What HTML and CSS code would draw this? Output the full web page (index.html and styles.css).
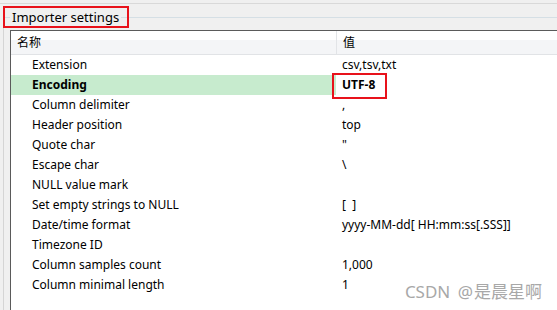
FILE: index.html
```html
<!DOCTYPE html>
<html lang="zh">
<head>
  <meta charset="UTF-8" />
  <meta name="viewport" content="width=device-width, initial-scale=1.0"/>
  <title>Importer settings</title>
  <link rel="stylesheet" href="styles.css">
</head>
<body>
  <div class="frame-top"></div>

  <div class="group">
    <span class="group-title">Importer settings</span>
    <span class="mark mark-title"></span>

    <div class="props">
      <div class="props-head">
        <div class="cell name-col">名称</div>
        <div class="cell value-col">值</div>
      </div>

      <div class="row"><div class="cell name">Extension</div><div class="cell value">csv,tsv,txt</div></div>
      <div class="row changed">
        <div class="cell name">Encoding</div>
        <div class="cell value">UTF-8<span class="mark mark-value"></span></div>
      </div>
      <div class="row"><div class="cell name">Column delimiter</div><div class="cell value">,</div></div>
      <div class="row"><div class="cell name">Header position</div><div class="cell value">top</div></div>
      <div class="row"><div class="cell name">Quote char</div><div class="cell value">"</div></div>
      <div class="row"><div class="cell name">Escape char</div><div class="cell value">\</div></div>
      <div class="row"><div class="cell name">NULL value mark</div><div class="cell value"></div></div>
      <div class="row"><div class="cell name">Set empty strings to NULL</div><div class="cell value">[&nbsp;&nbsp;]</div></div>
      <div class="row"><div class="cell name">Date/time format</div><div class="cell value">yyyy-MM-dd[ HH:mm:ss[.SSS]]</div></div>
      <div class="row"><div class="cell name">Timezone ID</div><div class="cell value"></div></div>
      <div class="row"><div class="cell name">Column samples count</div><div class="cell value">1,000</div></div>
      <div class="row"><div class="cell name">Column minimal length</div><div class="cell value">1</div></div>
    </div>
  </div>

  <div class="watermark">CSDN <span class="wm-at">@</span>是晨星啊</div>
</body>
</html>
```

FILE: styles.css
```css
html, body {
  height: 100%;
}

body {
  margin: 0;
  background-color: #f0f0f0;
  color: #000;
  font-family: "Noto Sans", "Noto Sans CJK SC", sans-serif;
  font-size: 12px;
  overflow: hidden;
  position: relative;
}

.frame-top {
  height: 3px;
  border-bottom: 1px solid #d9d9d9;
}

.group {
  position: relative;
  margin: 13px 0 0 3px;
  border-top: 1px solid #d5dfe5;
  border-left: 1px solid #d5d5d5;
  padding: 12px 0 0 6px;
}

.group-title {
  position: absolute;
  top: -9px;
  left: 6px;
  padding: 0 2px;
  background-color: #f0f0f0;
  font-size: 13px;
  line-height: 17px;
}

/* red annotation boxes */
.mark {
  position: absolute;
  border: 2px solid #e8121b;
  box-sizing: border-box;
  pointer-events: none;
}

.mark-title {
  left: -1px;
  top: -12px;
  width: 126px;
  height: 22px;
}

.mark-value {
  left: -4px;
  top: -2px;
  width: 55px;
  height: 26px;
}

.props {
  background-color: #fff;
  border-top: 1px solid #5a5a5a;
  border-left: 1px solid #5a5a5a;
  height: 279px;
}

.props-head {
  display: flex;
  height: 23px;
  background: linear-gradient(#fff 0 9px, #f4f5f7 9px);
  border-bottom: 1px solid #e1e3e6;
}

.props-head .cell {
  line-height: 24px;
  padding-left: 6px;
}

.props-head .name-col {
  width: 319px;
  border-right: 1px solid #e2e4e7;
}

.row {
  display: flex;
  height: 20px;
  line-height: 20px;
}

.row .name {
  width: 304px;
  padding-left: 21px;
}

.row .value {
  position: relative;
  padding-left: 6px;
}

.row.changed {
  font-weight: bold;
}

.row.changed .name {
  background-color: #c7ebce;
}

.watermark {
  position: absolute;
  right: 15px;
  bottom: 7px;
  font-size: 17px;
  color: #a8a8a8;
  text-shadow: 0 0 2px #fff;
}

.wm-at {
  margin: 0 1px 0 3px;
}
```
